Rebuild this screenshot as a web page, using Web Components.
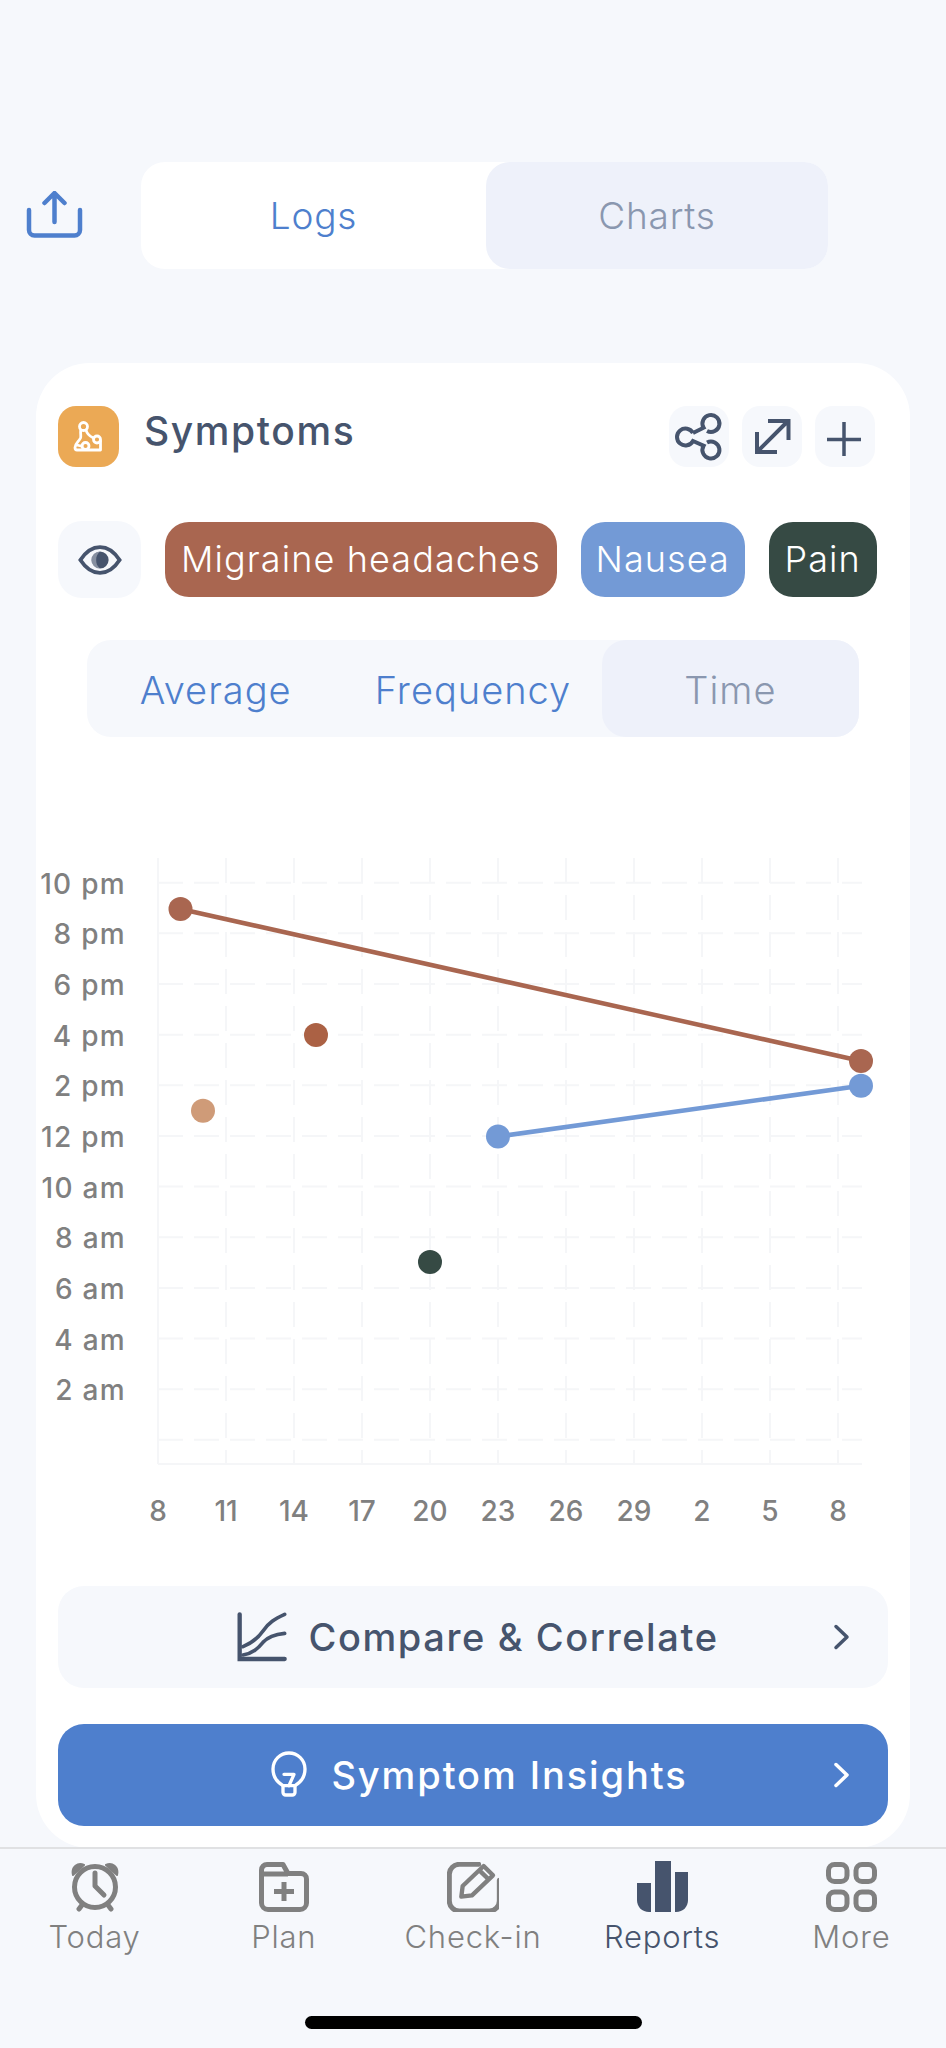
<!DOCTYPE html>
<html>
<head>
<meta charset="utf-8">
<title>Symptoms</title>
<style>
    html, body { margin: 0; padding: 0; }
    body {
        background: #f6f8fc;
        width: 946px;
        height: 2048px;
        overflow: hidden;
        font-family: "Inter", "Liberation Sans", sans-serif;
    }
</style>
</head>
<body>
<top-bar></top-bar>
<symptom-card></symptom-card>
<tab-bar></tab-bar>
<script>
const INK = '#46546d';
const BLUE = '#4e7fcd';
const GREY = '#808080';

class SegmentSwitch extends HTMLElement {
    constructor() {
        super();
        const items = this.getAttribute('items').split(',');
        const active = parseInt(this.getAttribute('active'));
        const shadowRoot = this.attachShadow({mode: 'open'});
        shadowRoot.innerHTML = `
            <style>
                :host {
                    display: grid;
                    grid-template-columns: var(--columns);
                    height: var(--height);
                    background: var(--track);
                    border-radius: 24px;
                    font-size: var(--size);
                    font-weight: 300;
                    letter-spacing: var(--spacing);
                    color: ${BLUE};
                }
                div {
                    display: flex;
                    align-items: center;
                    justify-content: center;
                    border-radius: 24px;
                    padding-top: var(--shift);
                }
                .active {
                    background: #eef1fa;
                    color: #8a97af;
                }
            </style>
            ${items.map((item, i) => `<div class="${i === active ? 'active' : ''}">${item}</div>`).join('')}
        `;
    }
}
customElements.define('segment-switch', SegmentSwitch);

class TopBar extends HTMLElement {
    constructor() {
        super();
        const shadowRoot = this.attachShadow({mode: 'open'});
        shadowRoot.innerHTML = `
            <style>
                :host {
                    display: flex;
                    align-items: center;
                    height: 107px;
                    padding: 162px 0 94px 0;
                }
                svg { flex: none; margin: 0 58px 0 26px; }
                segment-switch {
                    width: 687px;
                    --columns: 345px 342px;
                    --height: 107px;
                    --track: #fff;
                    --size: 37px;
                    --spacing: 0.8px;
                    --shift: 0px;
                }
            </style>
            <svg width="57" height="50" viewBox="0 0 57 50" fill="none" stroke="${BLUE}" stroke-width="4.5" stroke-linecap="round" stroke-linejoin="round">
                <path d="M3 19 V39 a5.5 5.5 0 0 0 5.5 5.5 H48.5 a5.5 5.5 0 0 0 5.5-5.5 V19"/>
                <path d="M28.5 31 V3 M18.5 12 L28.5 2 L38.5 12"/>
            </svg>
            <segment-switch items="Logs,Charts" active="1"></segment-switch>
        `;
    }
}
customElements.define('top-bar', TopBar);

class IconButton extends HTMLElement {
    constructor() {
        super();
        const shadowRoot = this.attachShadow({mode: 'open'});
        shadowRoot.innerHTML = `
            <style>
                :host {
                    display: flex;
                    align-items: center;
                    justify-content: center;
                    background: #f6f8fc;
                    border-radius: 18px;
                    width: 60px;
                    height: 61px;
                }
                :host([wide]) { width: 83px; height: 77px; border-radius: 24px; }
            </style>
            <slot></slot>
        `;
    }
}
customElements.define('icon-button', IconButton);

class SymptomPill extends HTMLElement {
    constructor() {
        super();
        const shadowRoot = this.attachShadow({mode: 'open'});
        shadowRoot.innerHTML = `
            <style>
                :host {
                    display: flex;
                    align-items: center;
                    height: 75px;
                    padding: 0 var(--pad, 16px) 1px;
                    box-sizing: border-box;
                    border-radius: 24px;
                    color: #fff;
                    font-size: 36px;
                    font-weight: 300;
                    letter-spacing: 1.1px;
                    white-space: nowrap;
                    background: var(--pill);
                }
            </style>
            <slot></slot>
        `;
    }
}
customElements.define('symptom-pill', SymptomPill);

class TimeChart extends HTMLElement {
    constructor() {
        super();
        const shadowRoot = this.attachShadow({mode: 'open'});
        const hours = ['10 pm', '8 pm', '6 pm', '4 pm', '2 pm', '12 pm', '10 am', '8 am', '6 am', '4 am', '2 am'];
        const days = ['8', '11', '14', '17', '20', '23', '26', '29', '2', '5', '8'];
        // the svg starts at page x 36, y 840
        const X = x => x - 36;
        const Y = y => y - 840;
        const rowY = i => 882.7 + i * 50.65;
        const colX = i => 158 + i * 68;
        let grid = '';
        let labels = '';
        for (let i = 0; i < 12; i++) {
            grid += `<line x1="${X(158)}" x2="${X(862)}" y1="${Y(rowY(i))}" y2="${Y(rowY(i))}" stroke-dasharray="25 11"/>`;
            if (hours[i]) {
                labels += `<text class="hour" x="${X(126)}" y="${Y(rowY(i)) + 11}" text-anchor="end">${hours[i]}</text>`;
            }
        }
        days.forEach((day, i) => {
            if (i > 0) {
                grid += `<line x1="${X(colX(i))}" x2="${X(colX(i))}" y1="${Y(858)}" y2="${Y(1464)}" stroke-dasharray="25 12"/>`;
            }
            labels += `<text x="${X(colX(i))}" y="${Y(1521)}" text-anchor="middle">${day}</text>`;
        });
        const dot = (x, y, color) => `<circle cx="${X(x)}" cy="${Y(y)}" r="12" fill="${color}"/>`;
        shadowRoot.innerHTML = `
            <style>
                :host { display: block; height: 720px; margin: 103px -22px 26px; }
                svg { display: block; }
                .grid line { stroke: #f5f6f8; stroke-width: 2; }
                text { font-family: inherit; font-size: 28px; font-weight: 500; fill: ${GREY}; }
                .hour { letter-spacing: 1.3px; }
            </style>
            <svg width="874" height="720" viewBox="0 0 874 720">
                <g class="grid">
                    ${grid}
                    <line x1="${X(158)}" x2="${X(158)}" y1="${Y(858)}" y2="${Y(1464)}"/>
                    <line x1="${X(158)}" x2="${X(862)}" y1="${Y(1464)}" y2="${Y(1464)}"/>
                </g>
                <g>${labels}</g>
                <line x1="${X(180.5)}" y1="${Y(909)}" x2="${X(861)}" y2="${Y(1061)}" stroke="#a96650" stroke-width="4.5"/>
                <line x1="${X(498)}" y1="${Y(1136.5)}" x2="${X(861)}" y2="${Y(1085.8)}" stroke="#739ad6" stroke-width="4.5"/>
                ${dot(180.5, 909, '#a96650')}
                ${dot(316, 1035, '#ab6144')}
                ${dot(203, 1110.7, '#cf9b78')}
                ${dot(861, 1061, '#a96650')}
                ${dot(861, 1085.8, '#739ad6')}
                ${dot(498, 1136.5, '#739ad6')}
                ${dot(430, 1262, '#364a44')}
            </svg>
        `;
    }
}
customElements.define('time-chart', TimeChart);

class ActionRow extends HTMLElement {
    constructor() {
        super();
        const shadowRoot = this.attachShadow({mode: 'open'});
        shadowRoot.innerHTML = `
            <style>
                :host {
                    display: grid;
                    grid-template-columns: 1fr auto;
                    align-items: center;
                    height: 102px;
                    padding: 0 38px 0 66px;
                    border-radius: 26px;
                    background: #f6f8fc;
                    color: ${INK};
                    font-size: 38px;
                    font-weight: 500;
                    letter-spacing: 1.6px;
                }
                :host([primary]) { background: ${BLUE}; color: #fff; letter-spacing: 1.9px; }
                .label { display: flex; align-items: center; justify-content: center; gap: 22px; }
                .chevron { display: block; }
            </style>
            <div class="label"><slot name="icon"></slot><slot></slot></div>
            <svg class="chevron" width="17" height="26" viewBox="0 0 17 26" fill="none" stroke="currentColor" stroke-width="3.5" stroke-linecap="round" stroke-linejoin="round">
                <path d="M3 2.5 L14 13 L3 23.5"/>
            </svg>
        `;
    }
}
customElements.define('action-row', ActionRow);

class SymptomCard extends HTMLElement {
    constructor() {
        super();
        const shadowRoot = this.attachShadow({mode: 'open'});
        shadowRoot.innerHTML = `
            <style>
                :host {
                    display: block;
                    box-sizing: border-box;
                    height: 1485px;
                    margin: 0 36px;
                    padding: 43px 22px 0;
                    background: #fff;
                    border-radius: 54px;
                }
                .head { display: flex; align-items: flex-start; height: 61px; }
                .badge {
                    flex: none;
                    display: flex;
                    width: 61px;
                    height: 61px;
                    border-radius: 18px;
                    background: #eba955;
                }
                .title {
                    flex: 1;
                    margin-left: 25px;
                    font-size: 39px;
                    font-weight: 500;
                    letter-spacing: 1.6px;
                    line-height: 50px;
                    color: ${INK};
                }
                .tools { display: flex; gap: 13px; margin-right: 13px; }
                .filters { display: flex; align-items: center; margin: 54px -9px 0 0; height: 77px; }
                .filters icon-button { margin-right: 24px; }
                .pills { display: flex; gap: 24px; }
                segment-switch {
                    margin: 42px 29px 0;
                    --columns: repeat(3, 1fr);
                    --height: 97px;
                    --track: #f6f8fc;
                    --size: 38px;
                    --spacing: 1px;
                    --shift: 2px;
                }
                action-row + action-row { margin-top: 36px; }
            </style>
            <div class="head">
                <div class="badge">
                    <svg width="61" height="61" viewBox="0 0 61 61" fill="none" stroke="#fff" stroke-width="2.8" stroke-linecap="round" stroke-linejoin="round">
                        <circle cx="25.5" cy="20.5" r="4"/>
                        <circle cx="39" cy="33.5" r="3.5"/>
                        <circle cx="27.5" cy="40" r="3.5"/>
                        <path d="M28 24 c1 4 3 6 7.5 8 M42.5 35 V44 H19 c-1.5 0-2-1-2-2.5 c0-4 4-6 5.5-9.5 c.8-2-.2-4 .2-7.5 M24 40 c-2 0-3.5-.5-5-1"/>
                    </svg>
                </div>
                <div class="title">Symptoms</div>
                <div class="tools">
                    <icon-button>
                        <svg width="60" height="61" viewBox="0 0 60 61" fill="none" stroke="${INK}" stroke-width="4">
                            <path d="M24 27 A8.5 8.5 0 1 0 24 35 L34.6 39.75 A8.5 8.5 0 1 0 38 36.5"/>
                            <path d="M24 27 L34.6 21.75 A8.5 8.5 0 1 1 38 25"/>
                        </svg>
                    </icon-button>
                    <icon-button>
                        <svg width="60" height="61" viewBox="0 0 60 61" fill="none" stroke="${INK}" stroke-width="4">
                            <path d="M15 46 L46 15 M26 15 H46.5 V34 M15 26 V46 H35"/>
                        </svg>
                    </icon-button>
                    <icon-button>
                        <svg width="60" height="61" viewBox="0 0 60 61" fill="none" stroke="${INK}" stroke-width="3.5">
                            <path d="M29 16 V50 M12 33.5 H46"/>
                        </svg>
                    </icon-button>
                </div>
            </div>
            <div class="filters">
                <icon-button wide>
                    <svg width="44" height="32" viewBox="0 0 46 32" fill="none">
                        <path d="M2.5 16 C9 6 15 2.5 23 2.5 S37 6 43.5 16 C37 26 31 29.5 23 29.5 S9 26 2.5 16 Z" stroke="${INK}" stroke-width="4"/>
                        <circle cx="23" cy="16" r="9" fill="${INK}"/>
                        <path d="M23 7 a9 9 0 0 0 0 18 c-3-3-4-5-4-9 s1-6 4-9 Z" fill="#fff" opacity=".35"/>
                    </svg>
                </icon-button>
                <div class="pills">
                    <symptom-pill style="--pill:#a96650">Migraine headaches</symptom-pill>
                    <symptom-pill style="--pill:#739ad6;--pad:14.5px">Nausea</symptom-pill>
                    <symptom-pill style="--pill:#364a44">Pain</symptom-pill>
                </div>
            </div>
            <segment-switch items="Average,Frequency,Time" active="2"></segment-switch>
            <time-chart></time-chart>
            <action-row>
                <svg slot="icon" width="70" height="65" viewBox="0 0 210 195" fill="none" stroke="${INK}" stroke-linecap="round" style="display:block;margin:0 -12px 0 -10px">
                    <path d="M35 28 V162 H170" stroke-width="13"/>
                    <path d="M45 125 C75 112 90 100 105 78 C122 52 140 42 170 28" stroke-width="11"/>
                    <path d="M45 150 C75 145 90 130 105 112 C120 95 140 88 170 85" stroke-width="11"/>
                </svg>
                Compare &amp; Correlate
            </action-row>
            <action-row primary>
                <svg slot="icon" width="60" height="60" viewBox="0 0 180 180" fill="none" stroke="#fff" stroke-width="10" stroke-linecap="round" stroke-linejoin="round" style="display:block;margin:0 -10px">
                    <path d="M72 122 C52 110 42 95 42 72 A48 48 0 1 1 138 72 C138 95 128 110 108 122"/>
                    <path d="M72 122 V142 a8 8 0 0 0 8 8 H100 a8 8 0 0 0 8-8 V122 Z"/>
                    <path d="M75 88 H105 L90 122"/>
                </svg>
                Symptom Insights
            </action-row>
        `;
    }
}
customElements.define('symptom-card', SymptomCard);

class TabItem extends HTMLElement {
    constructor() {
        super();
        const shadowRoot = this.attachShadow({mode: 'open'});
        shadowRoot.innerHTML = `
            <style>
                :host {
                    display: flex;
                    flex-direction: column;
                    align-items: center;
                    color: ${GREY};
                    font-size: 31px;
                    font-weight: 300;
                    letter-spacing: 0.8px;
                }
                :host([current]) { color: ${INK}; }
                slot[name=icon]::slotted(svg) { display: block; }
                .label { line-height: 40px; margin-top: 5px; }
            </style>
            <slot name="icon"></slot>
            <div class="label"><slot></slot></div>
        `;
    }
}
customElements.define('tab-item', TabItem);

class TabBar extends HTMLElement {
    constructor() {
        super();
        const shadowRoot = this.attachShadow({mode: 'open'});
        shadowRoot.innerHTML = `
            <style>
                :host {
                    display: block;
                    box-sizing: border-box;
                    height: 201px;
                    margin-top: -1px;
                    border-top: 2px solid #e0e1e3;
                    padding-top: 13px;
                    position: relative;
                }
                .tabs { display: grid; grid-template-columns: repeat(5, 1fr); }
                .home {
                    position: absolute;
                    left: 305px;
                    top: 167px;
                    width: 337px;
                    height: 13px;
                    border-radius: 7px;
                    background: #000;
                }
            </style>
            <div class="tabs">
                <tab-item>
                    <svg slot="icon" width="52" height="50" viewBox="0 0 52 50" fill="none" stroke="${GREY}" stroke-width="5" stroke-linecap="round" stroke-linejoin="round">
                        <circle cx="26" cy="25" r="20.5"/>
                        <path d="M26 11 V24 L35 33"/>
                        <path d="M4 13 C2 5 9 0 15 3 Z M48 13 C50 5 43 0 37 3 Z" fill="${GREY}" stroke-width="2"/>
                        <path d="M10 47 L13 43 M42 47 L39 43"/>
                    </svg>
                    Today
                </tab-item>
                <tab-item>
                    <svg slot="icon" width="50" height="50" viewBox="0 0 50 50" fill="none" stroke="${GREY}" stroke-width="5" stroke-linejoin="round">
                        <path d="M2.5 12 V8 a5.5 5.5 0 0 1 5.5-5.5 H24 l5 9 H42 a5.5 5.5 0 0 1 5.5 5.5 V41 a6.5 6.5 0 0 1-6.5 6.5 H9 a6.5 6.5 0 0 1-6.5-6.5 Z M2.5 12 H29"/>
                        <path d="M25 20 V39 M15 29.5 H35"/>
                    </svg>
                    Plan
                </tab-item>
                <tab-item>
                    <svg slot="icon" width="52" height="50" viewBox="25 20 156 150" fill="none" stroke="${GREY}" stroke-linejoin="round" stroke-linecap="round">
                        <path d="M120 27 H62 a30 30 0 0 0-30 30 V137 a30 30 0 0 0 30 30 H152 a30 30 0 0 0 30-30 V75" stroke-width="15"/>
                        <path d="M68 124 L72 92 L135 32 L163 60 L100 120 Z M122 45 L150 72" stroke-width="13"/>
                    </svg>
                    Check-in
                </tab-item>
                <tab-item current>
                    <svg slot="icon" width="51" height="51" viewBox="0 0 51 51" fill="${INK}" style="margin-top:-1px">
                        <path d="M0 22 H14 V51 H12 C5 51 0 46 0 39 Z"/>
                        <rect x="18" y="0" width="16" height="51"/>
                        <path d="M38 11 H51 V39 C51 46 46 51 39 51 H38 Z"/>
                    </svg>
                    Reports
                </tab-item>
                <tab-item>
                    <svg slot="icon" width="51" height="50" viewBox="0 0 51 50" fill="none" stroke="${GREY}" stroke-width="5">
                        <rect x="2.5" y="2.5" width="18.5" height="17" rx="6"/>
                        <rect x="30" y="2.5" width="18.5" height="17" rx="6"/>
                        <rect x="2.5" y="30" width="18.5" height="17.5" rx="6"/>
                        <rect x="30" y="30" width="18.5" height="17.5" rx="6"/>
                    </svg>
                    More
                </tab-item>
            </div>
            <div class="home"></div>
        `;
    }
}
customElements.define('tab-bar', TabBar);
</script>
</body>
</html>
